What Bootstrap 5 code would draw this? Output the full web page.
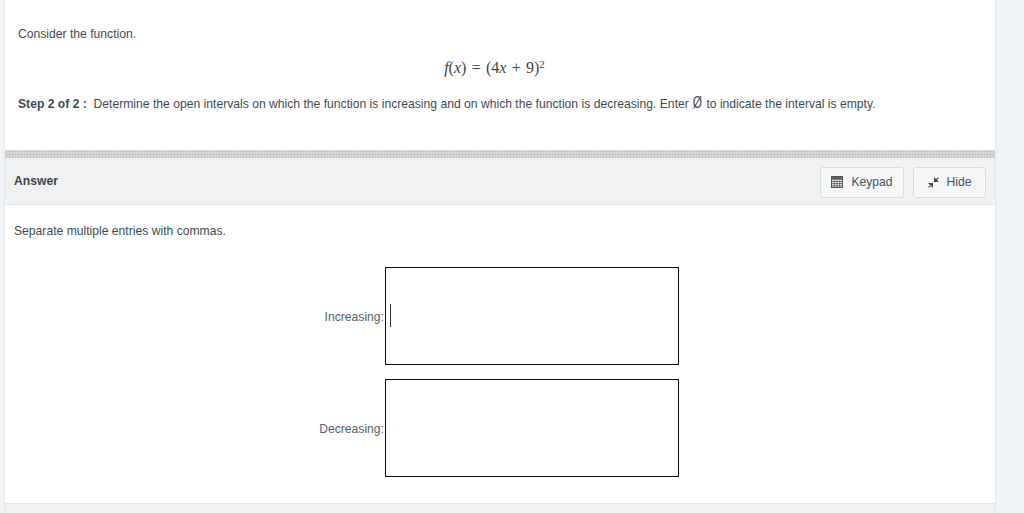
<!DOCTYPE html>
<html lang="en">
<head>
<meta charset="utf-8">
<title>Answer</title>
<link href="https://cdn.jsdelivr.net/npm/bootstrap@5.3.0/dist/css/bootstrap.min.css" rel="stylesheet">
<style>
html,body{height:513px;overflow:hidden;background:#f0f3f5;}
body{font-family:"Liberation Sans",Arial,sans-serif;font-size:12.15px;color:#3f4a52;}
.sheet{margin:0 28px 0 4px;width:992px;height:513px;background:#fff;border-left:1px solid #e3e7e9;border-right:1px solid #e3e7e9;}
.question{height:150px;padding:27px 13px 0;}
.question p{margin:0;line-height:14px;}
.formula{font-family:"Liberation Serif",serif;font-size:16px;color:#444;text-align:center;padding:17px 0 0 0;height:55px;margin-right:11px;line-height:20px;word-spacing:1.3px;}
.formula sup{font-size:11px;top:-.5em;}
.empty-set{display:inline-block;font-size:16.5px;line-height:12px;transform:scaleX(.72);margin:0 -1px;}
.dots{height:8px;background-color:#fafafa;background-image:radial-gradient(circle,#b9bcbf 45%,transparent 50%),radial-gradient(circle,#b9bcbf 45%,transparent 50%);background-size:3px 3px;background-position:0 0,1.5px 1.5px;}
.answer-bar{height:47px;background:#eff1f3;border-bottom:1px solid #e5e8ea;padding:2px 9px 0 9px;}
.answer-title{font-weight:700;color:#3b444b;padding-bottom:2px;}
.tool-btn{height:31px;font-size:12.15px;color:#46525b;background:#f5f7f8;border:1px solid #d5dde1;border-radius:3px;padding:0;display:flex;align-items:center;justify-content:center;gap:8px;}
.tool-btn:hover{background:#f5f7f8;color:#46525b;border-color:#d5dde1;}
.btn-keypad{width:84px;}
.btn-hide{width:73px;}
.btn-gap{gap:9px;}
.answer-body{height:298px;padding:20px 9px 0;}
.answer-body p{margin:0;line-height:13px;}
.entry-list{padding-top:29px;gap:14px;}
.entry{height:98px;}
.entry-label{width:371px;text-align:right;color:#56646d;padding:2px 1px 0 0;}
.entry-box{width:294px;height:98px;border:1px solid #111;background:#fff;padding-left:4px;}
.caret-mark{width:1px;height:23px;background:#333;margin-top:36px;}
.sheet-foot{height:10px;background:#f0f1f2;border-top:1px solid #e9e9e9;}
</style>
</head>
<body>
<div class="sheet">
  <section class="question">
    <p>Consider the function.</p>
    <div class="formula"><i>f</i>(<i>x</i>) = (4<i>x</i> + 9)<sup>2</sup></div>
    <p><b>Step 2 of 2 :</b>&nbsp; Determine the open intervals on which the function is increasing and on which the function is decreasing. Enter <span class="empty-set">Ø</span> to indicate the interval is empty.</p>
  </section>
  <div class="dots"></div>
  <div class="answer-bar d-flex align-items-center justify-content-between">
    <span class="answer-title">Answer</span>
    <div class="d-flex btn-gap">
      <button type="button" class="btn tool-btn btn-keypad">
        <svg width="12" height="12" viewBox="0 0 11 11" aria-hidden="true"><rect x=".5" y=".5" width="10" height="10" fill="#fff" stroke="#555"/><rect x="1" y="1" width="9" height="2.4" fill="#555"/><path d="M1 5h9M1 7h9M1 9h9M3 4v6M5.5 4v6M8 4v6" stroke="#666" stroke-width=".9"/></svg>
        <span>Keypad</span>
      </button>
      <button type="button" class="btn tool-btn btn-hide">
        <svg width="11" height="11" viewBox="0 0 10 10" aria-hidden="true"><path d="M9.5.5 6.6 3.4M6 1.3V4h2.7L6 1.3ZM.5 9.5l2.9-2.9M4 8.7V6H1.3L4 8.7Z" stroke="#444" stroke-width="1" fill="#444"/></svg>
        <span>Hide</span>
      </button>
    </div>
  </div>
  <section class="answer-body">
    <p>Separate multiple entries with commas.</p>
    <div class="entry-list d-flex flex-column">
      <div class="entry d-flex align-items-center">
        <label class="entry-label">Increasing:</label>
        <div class="entry-box"><div class="caret-mark"></div></div>
      </div>
      <div class="entry d-flex align-items-center">
        <label class="entry-label">Decreasing:</label>
        <div class="entry-box"></div>
      </div>
    </div>
  </section>
  <div class="sheet-foot"></div>
</div>
<script src="https://cdn.jsdelivr.net/npm/bootstrap@5.3.0/dist/js/bootstrap.bundle.min.js"></script>
</body>
</html>
